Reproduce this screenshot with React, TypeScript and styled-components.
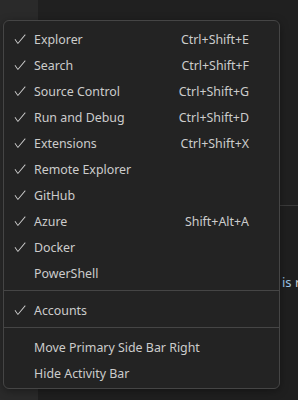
import * as React from 'react';
import styled, { createGlobalStyle } from 'styled-components';

interface Item {
  label: string;
  checked?: boolean;
  shortcut?: string;
}

const groups: Item[][] = [
  [
    { label: 'Explorer', checked: true, shortcut: 'Ctrl+Shift+E' },
    { label: 'Search', checked: true, shortcut: 'Ctrl+Shift+F' },
    { label: 'Source Control', checked: true, shortcut: 'Ctrl+Shift+G' },
    { label: 'Run and Debug', checked: true, shortcut: 'Ctrl+Shift+D' },
    { label: 'Extensions', checked: true, shortcut: 'Ctrl+Shift+X' },
    { label: 'Remote Explorer', checked: true },
    { label: 'GitHub', checked: true },
    { label: 'Azure', checked: true, shortcut: 'Shift+Alt+A' },
    { label: 'Docker', checked: true },
    { label: 'PowerShell' }
  ],
  [{ label: 'Accounts', checked: true }],
  [{ label: 'Move Primary Side Bar Right' }, { label: 'Hide Activity Bar' }]
];

const Check = () => (
  <svg width="14" height="14" viewBox="0 0 16 16" fill="#cccccc">
    <path d="M14.431 3.323l-8.47 10-.79-.036-3.35-4.77.818-.574 2.978 4.24 8.051-9.506.764.646z" />
  </svg>
);

const App: React.FC = () => (
  <>
    <GlobalStyle />
    <Workbench>
      <ActivityBar />
      <Editor>
        <EditorTop />
        <EditorBody>
          <CodeLine>
            <Keyword>is</Keyword> r
          </CodeLine>
        </EditorBody>
      </Editor>
      <Menu>
        {groups.map((group, gi) => (
          <React.Fragment key={gi}>
            {gi > 0 && <Separator />}
            {group.map(item => (
              <Row key={item.label}>
                <CheckSlot>{item.checked && <Check />}</CheckSlot>
                <Label>{item.label}</Label>
                {item.shortcut && <Shortcut>{item.shortcut}</Shortcut>}
              </Row>
            ))}
          </React.Fragment>
        ))}
      </Menu>
    </Workbench>
  </>
);

const GlobalStyle = createGlobalStyle`
  html, body {
    margin: 0;
    padding: 0;
    background: #1f1f1f;
  }
  body {
    font-family: "Noto Sans", "Open Sans", sans-serif;
  }
`;

const Workbench = styled.div`
  position: relative;
  display: flex;
  width: 298px;
  height: 400px;
  overflow: hidden;
  background: #1f1f1f;
`;

const ActivityBar = styled.div`
  width: 38px;
  flex-shrink: 0;
  background: #2a2a2a;
`;

const Editor = styled.div`
  flex: 1;
  display: flex;
  flex-direction: column;
`;

const EditorTop = styled.div`
  height: 205px;
  border-bottom: 1px solid #3a3a3a;
  background: #202020;
`;

const EditorBody = styled.div`
  flex: 1;
  padding: 67px 0 0 244px;
`;

const CodeLine = styled.div`
  font-family: "Noto Sans", sans-serif;
  font-size: 13px;
  line-height: 18px;
  color: #cccccc;
  white-space: nowrap;
`;

const Keyword = styled.span`
  color: #9cc4e4;
`;

const Menu = styled.div`
  position: absolute;
  left: 3px;
  top: 20px;
  width: 275px;
  padding: 5px 0 2px;
  background: #232323;
  border: 1px solid #454545;
  border-radius: 6px;
  box-shadow: 0 2px 8px rgba(0, 0, 0, 0.36);
`;

const Row = styled.div`
  display: flex;
  align-items: center;
  height: 26px;
  color: #cccccc;
  font-size: 12.4px;
`;

const CheckSlot = styled.div`
  width: 30px;
  display: flex;
  justify-content: center;
  padding-left: 2px;
  box-sizing: border-box;
`;

const Label = styled.span`
  flex: 1;
  white-space: nowrap;
`;

const Shortcut = styled.span`
  padding-right: 30px;
  white-space: nowrap;
`;

const Separator = styled.div`
  height: 1px;
  margin: 4px 0 6px;
  background: #454545;
`;

export default App;
